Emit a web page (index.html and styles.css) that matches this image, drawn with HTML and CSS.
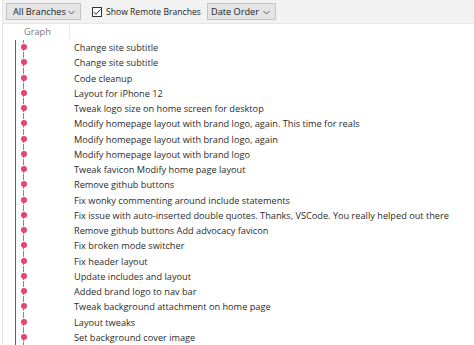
FILE: index.html
```html
<!DOCTYPE html>
<html lang="en">
<head>
    <meta charset="UTF-8">
    <title>Git Graph</title>
    <link rel="stylesheet" href="styles.css">
</head>
<body>
    <div class="app">
        <div class="toolbar">
            <div class="select branches">
                <span>All Branches</span>
                <svg class="chev" width="7" height="5" viewBox="0 0 7 5"><path d="M0.5 1 L3.5 4 L6.5 1" fill="none" stroke="#555" stroke-width="1"/></svg>
            </div>
            <label class="check">
                <span class="box">
                    <svg width="10" height="10" viewBox="0 0 10 10"><path d="M1.8 5 L4 7.3 L8.4 2.4" fill="none" stroke="#333" stroke-width="1"/></svg>
                </span>
                Show Remote Branches
            </label>
            <div class="select order">
                <span>Date Order</span>
                <svg class="chev" width="7" height="5" viewBox="0 0 7 5"><path d="M0.5 1 L3.5 4 L6.5 1" fill="none" stroke="#555" stroke-width="1"/></svg>
            </div>
        </div>
        <div class="header">
            <div class="col-graph">Graph</div>
            <div class="col-desc"></div>
        </div>
        <div class="rows">
            <div class="row"><div class="graph"><span class="dot"></span></div><div class="desc">Change site subtitle</div></div>
            <div class="row"><div class="graph"><span class="dot"></span></div><div class="desc">Change site subtitle</div></div>
            <div class="row"><div class="graph"><span class="dot"></span></div><div class="desc">Code cleanup</div></div>
            <div class="row"><div class="graph"><span class="dot"></span></div><div class="desc">Layout for iPhone 12</div></div>
            <div class="row"><div class="graph"><span class="dot"></span></div><div class="desc">Tweak logo size on home screen for desktop</div></div>
            <div class="row"><div class="graph"><span class="dot"></span></div><div class="desc">Modify homepage layout with brand logo, again. This time for reals</div></div>
            <div class="row"><div class="graph"><span class="dot"></span></div><div class="desc">Modify homepage layout with brand logo, again</div></div>
            <div class="row"><div class="graph"><span class="dot"></span></div><div class="desc">Modify homepage layout with brand logo</div></div>
            <div class="row"><div class="graph"><span class="dot"></span></div><div class="desc">Tweak favicon Modify home page layout</div></div>
            <div class="row"><div class="graph"><span class="dot"></span></div><div class="desc">Remove github buttons</div></div>
            <div class="row"><div class="graph"><span class="dot"></span></div><div class="desc">Fix wonky commenting around include statements</div></div>
            <div class="row"><div class="graph"><span class="dot"></span></div><div class="desc">Fix issue with auto-inserted double quotes. Thanks, VSCode. You really helped out there</div></div>
            <div class="row"><div class="graph"><span class="dot"></span></div><div class="desc">Remove github buttons Add advocacy favicon</div></div>
            <div class="row"><div class="graph"><span class="dot"></span></div><div class="desc">Fix broken mode switcher</div></div>
            <div class="row"><div class="graph"><span class="dot"></span></div><div class="desc">Fix header layout</div></div>
            <div class="row"><div class="graph"><span class="dot"></span></div><div class="desc">Update includes and layout</div></div>
            <div class="row"><div class="graph"><span class="dot"></span></div><div class="desc">Added brand logo to nav bar</div></div>
            <div class="row"><div class="graph"><span class="dot"></span></div><div class="desc">Tweak background attachment on home page</div></div>
            <div class="row"><div class="graph"><span class="dot"></span></div><div class="desc">Layout tweaks</div></div>
            <div class="row"><div class="graph"><span class="dot"></span></div><div class="desc">Set background cover image</div></div>
            <div class="row"><div class="graph"><span class="dot"></span></div><div class="desc"></div></div>
        </div>
    </div>
</body>
</html>
```

FILE: styles.css
```css
body {
    margin: 0;
    padding: 0;
    font-family: "Open Sans", "Noto Sans", sans-serif;
    font-size: 9.2px;
    color: #2b2b2b;
    background-color: white;
    overflow: hidden;
}
.app {
    height: 345px;
    overflow: hidden;
    border-left: 1px solid #e3e3e3;
    margin-left: 2px;
}
.toolbar {
    display: flex;
    align-items: center;
    height: 23px;
    padding-left: 3px;
    background-color: #f2f2f2;
    border-bottom: 1px solid #e6e6e6;
}
.select {
    display: flex;
    align-items: center;
    justify-content: space-between;
    box-sizing: border-box;
    height: 17px;
    padding: 0 5px 0 6px;
    background-color: #e4e4e4;
    border: 1px solid #c4c4c4;
    color: #222;
}
.branches {
    width: 75px;
}
.order {
    width: 69px;
    padding-left: 3px;
}
.chev {
    margin-top: 1px;
}
.check {
    display: flex;
    align-items: center;
    gap: 4px;
    width: 115px;
    margin-left: 11px;
    font-size: 8.6px;
    color: #222;
}
.box {
    display: flex;
    width: 10px;
    height: 10px;
    border: 1px solid #333;
    box-sizing: border-box;
    background-color: white;
}
.box svg {
    margin: -1px;
}
.header {
    display: flex;
    height: 15px;
    color: #777;
}
.col-graph {
    width: 67px;
    padding-left: 21px;
    box-sizing: border-box;
    display: flex;
    align-items: center;
    border-right: 1px solid #e8e8e8;
}
.rows {
    padding-top: 1px;
}
.row {
    display: flex;
    height: 15.26px;
    align-items: center;
}
.graph {
    position: relative;
    width: 69px;
    height: 100%;
    flex: none;
}
.graph::before {
    content: "";
    position: absolute;
    left: 12px;
    top: 0;
    bottom: 0;
    border-left: 1.5px solid #2d6cb5;
}
.graph::after {
    content: "";
    position: absolute;
    left: 19.5px;
    top: 0;
    bottom: 0;
    border-left: 1.5px dashed #e8577a;
}
.dot {
    position: absolute;
    left: 17.5px;
    top: 50%;
    width: 6px;
    height: 6px;
    margin-top: -3.5px;
    border-radius: 50%;
    background-color: #e8456e;
    z-index: 1;
}
.desc {
    padding-left: 2px;
    white-space: nowrap;
}
```
